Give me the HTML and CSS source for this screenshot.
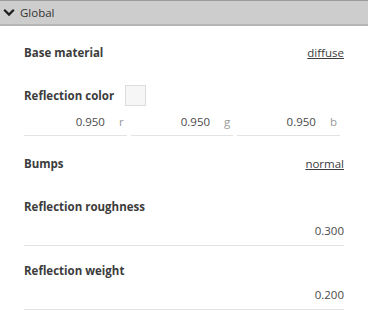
FILE: index.html
```html
<!DOCTYPE html>
<html>
<head>
<meta charset="utf-8">
<link rel="stylesheet" href="styles.css">
</head>
<body>
<div class="panel">
  <div class="header">
    <svg class="chev" width="12" height="9" viewBox="0 0 12 9"><path d="M1.2 1.8 L6 6.6 L10.8 1.8" fill="none" stroke="#1e1e1e" stroke-width="2.2"/></svg>
    <span class="title">Global</span>
  </div>
  <div class="content">
    <div class="row base">
      <span class="label">Base material</span>
      <a class="link">diffuse</a>
    </div>
    <div class="row color">
      <span class="label">Reflection color</span>
      <span class="swatch"></span>
    </div>
    <div class="rgb">
      <div class="field"><span class="num">0.950</span><span class="ch">r</span></div>
      <div class="field"><span class="num">0.950</span><span class="ch">g</span></div>
      <div class="field"><span class="num">0.950</span><span class="ch">b</span></div>
    </div>
    <div class="row bumps">
      <span class="label">Bumps</span>
      <a class="link">normal</a>
    </div>
    <div class="row rough">
      <span class="label">Reflection roughness</span>
    </div>
    <div class="value">0.300</div>
    <div class="row weight">
      <span class="label">Reflection weight</span>
    </div>
    <div class="value">0.200</div>
  </div>
</div>
</body>
</html>
```
FILE: styles.css
```css
html, body {
  margin: 0;
  padding: 0;
  background: #ffffff;
}
body {
  font-family: "Open Sans", "Liberation Sans", sans-serif;
  font-size: 11.5px;
  color: #3c3c3c;
  width: 368px;
  height: 320px;
  overflow: hidden;
}
.header {
  height: 23px;
  background: #cdcdcd;
  border-top: 1px solid #9c9c9c;
  border-bottom: 2px solid #b4b4b4;
  display: flex;
  align-items: center;
  padding-left: 3px;
}
.chev {
  display: block;
  margin-right: 5px;
}
.title {
  font-size: 11.5px;
  color: #333;
}
.content {
  padding: 0 24px;
}
.row {
  display: flex;
  align-items: center;
  justify-content: space-between;
  height: 20px;
}
.label {
  font-weight: 700;
  color: #3c3c3c;
}
.link {
  text-decoration: underline;
  color: #3c3c3c;
}
.base { margin-top: 16px; }
.color {
  margin-top: 23px;
  justify-content: flex-start;
}
.swatch {
  width: 19px;
  height: 19px;
  margin-left: 11px;
  border: 1px solid #dcdcdc;
  background: #f6f6f6;
}
.rgb {
  display: grid;
  grid-template-columns: repeat(3, 1fr);
  margin-top: 3px;
}
.field {
  height: 27px;
  margin-right: 4px;
  border-bottom: 1px solid #e3e3e3;
  display: flex;
  align-items: center;
  justify-content: flex-end;
}
.num {
  color: #4a4a4a;
}
.ch {
  color: #9a9a9a;
  margin-left: 14px;
  margin-right: 3px;
}
.bumps { margin-top: 17px; }
.rough { margin-top: 23px; }
.weight { margin-top: 14px; }
.value {
  height: 29px;
  color: #4a4a4a;
  border-bottom: 1px solid #e3e3e3;
  display: flex;
  align-items: center;
  justify-content: flex-end;
}
```
